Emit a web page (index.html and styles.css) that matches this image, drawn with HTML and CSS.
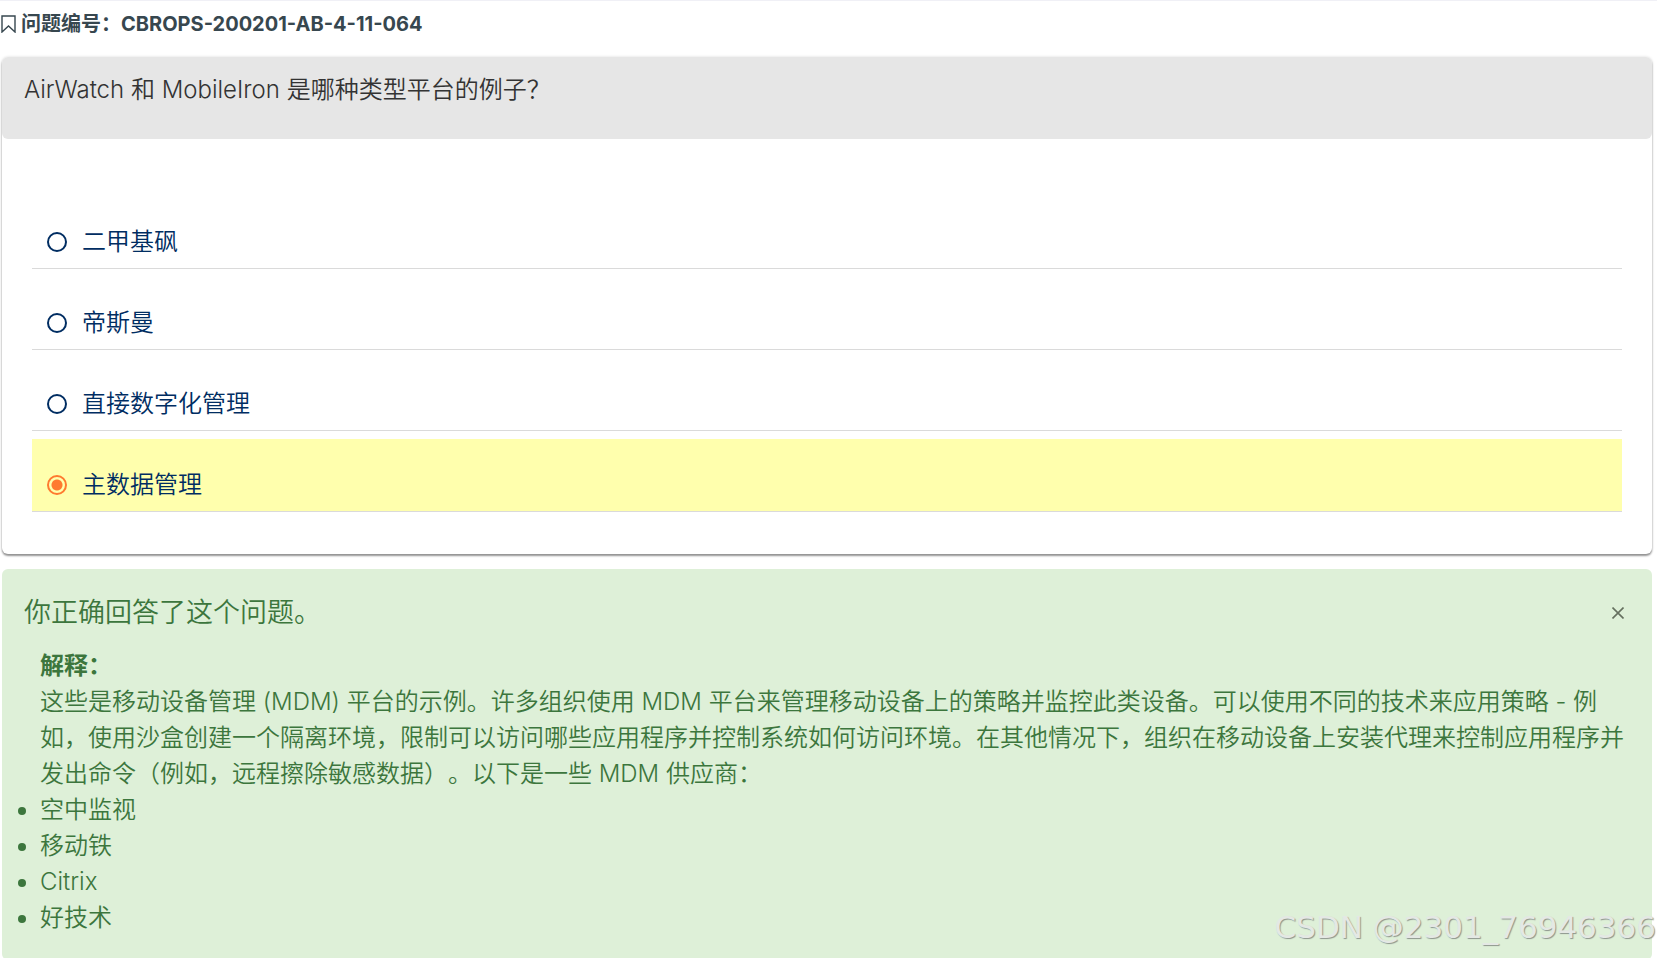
FILE: index.html
```html
<!DOCTYPE html>
<html lang="zh-CN">
<head>
    <meta charset="UTF-8">
    <meta name="viewport" content="width=device-width, initial-scale=1.0">
    <title>CBROPS-200201-AB-4-11-064</title>
    <link rel="stylesheet" href="styles.css">
</head>
<body>
    <main class="container">
        <!-- Question number -->
        <h1 class="question-id">
            <svg class="bookmark" width="16" height="18" viewBox="0 0 16 18" fill="none" stroke="currentColor" stroke-width="1.4" aria-hidden="true">
                <path d="M2 1h13v16l-6.5-6-6.5 6z"/>
            </svg>
            <span>问题编号：CBROPS-200201-AB-4-11-064</span>
        </h1>

        <!-- Question card -->
        <form class="card">
            <h2 class="question">AirWatch 和 MobileIron 是哪种类型平台的例子？</h2>
            <div class="options">
                <label class="option">
                    <input type="radio" name="answer" value="dms">
                    <span>二甲基砜</span>
                </label>
                <label class="option">
                    <input type="radio" name="answer" value="dsm">
                    <span>帝斯曼</span>
                </label>
                <label class="option">
                    <input type="radio" name="answer" value="ddm">
                    <span>直接数字化管理</span>
                </label>
                <label class="option correct">
                    <input type="radio" name="answer" value="mdm" checked>
                    <span>主数据管理</span>
                </label>
            </div>
        </form>

        <!-- Feedback -->
        <section class="feedback">
            <div class="feedback-header">
                <h3>你正确回答了这个问题。</h3>
                <button type="button" class="close" aria-label="关闭">
                    <svg width="12" height="12" viewBox="0 0 12 12" stroke="currentColor" stroke-width="1.6">
                        <path d="M0.5 0.5l11 11M11.5 0.5l-11 11"/>
                    </svg>
                </button>
            </div>
            <div class="explanation">
                <strong>解释：</strong>
                <p>这些是移动设备管理 (MDM) 平台的示例。许多组织使用 MDM 平台来管理移动设备上的策略并监控此类设备。可以使用不同的技术来应用策略 - 例如，使用沙盒创建一个隔离环境，限制可以访问哪些应用程序并控制系统如何访问环境。在其他情况下，组织在移动设备上安装代理来控制应用程序并发出命令（例如，远程擦除敏感数据）。以下是一些 MDM 供应商：</p>
                <ul>
                    <li>空中监视</li>
                    <li>移动铁</li>
                    <li>Citrix</li>
                    <li>好技术</li>
                </ul>
            </div>
            <span class="watermark">CSDN @2301_76946366</span>
        </section>
    </main>
</body>
</html>
```
FILE: styles.css
```css
* {
    margin: 0;
    padding: 0;
    box-sizing: border-box;
}

body {
    background: #fff;
    color: #333;
    font-family: Inter, "Noto Sans CJK SC", sans-serif;
    font-size: 24px;
    font-weight: 350;
    line-height: 36px;
    text-spacing-trim: space-all;
    border-top: 1px solid #f0f0f6;
}

.container {
    padding: 0 5px 0 2px;
}

/* Question number */
.question-id {
    display: flex;
    align-items: center;
    gap: 5px;
    height: 46px;
    margin: 0 0 10px -2px;
    color: #37474f;
    font-size: 20px;
    font-weight: 700;
}

.bookmark {
    flex: none;
}

/* Question card */
.card {
    border-radius: 6px;
    box-shadow: 0 2px 2px rgba(0, 0, 0, 0.4), 0 0 3px rgba(0, 0, 0, 0.15);
}

.question {
    min-height: 82px;
    padding: 15px 22px;
    background: #e6e6e6;
    border-radius: 6px;
    font-size: 24px;
    font-weight: 350;
}

.options {
    display: flex;
    flex-direction: column;
    gap: 8px;
    padding: 57px 30px 42px;
}

.option {
    display: flex;
    align-items: center;
    gap: 15px;
    padding: 28px 15px 8px;
    border-bottom: 1px solid #dadada;
    color: #002d62;
    cursor: pointer;
}

.option.correct {
    background: #ffffad;
}

.option input {
    appearance: none;
    flex: none;
    width: 20px;
    height: 20px;
    border: 2px solid #002d62;
    border-radius: 50%;
}

.option input:checked {
    border-color: #ff7a2f;
    background: radial-gradient(circle, #ff7a2f 5px, transparent 6px);
}

/* Feedback */
.feedback {
    position: relative;
    margin-top: 15px;
    padding: 24px 27px 24px 22px;
    background: #def0d8;
    border-radius: 6px;
    color: #3c763d;
}

.feedback-header {
    display: flex;
    align-items: center;
    justify-content: space-between;
    height: 40px;
    margin-bottom: 15px;
}

.feedback-header h3 {
    font-size: 27px;
    font-weight: 350;
}

.close {
    display: flex;
    padding: 1px;
    border: none;
    background: none;
    color: #65705f;
    cursor: pointer;
}

.explanation {
    padding-left: 16px;
}

.explanation strong {
    display: block;
    font-weight: 700;
}

.watermark {
    position: absolute;
    right: -4px;
    bottom: 15px;
    color: #e4e8e4;
    font-family: "DejaVu Sans", sans-serif;
    font-size: 31px;
    font-weight: 400;
    text-shadow: 1px 1px 1px #8d958d;
}
```
